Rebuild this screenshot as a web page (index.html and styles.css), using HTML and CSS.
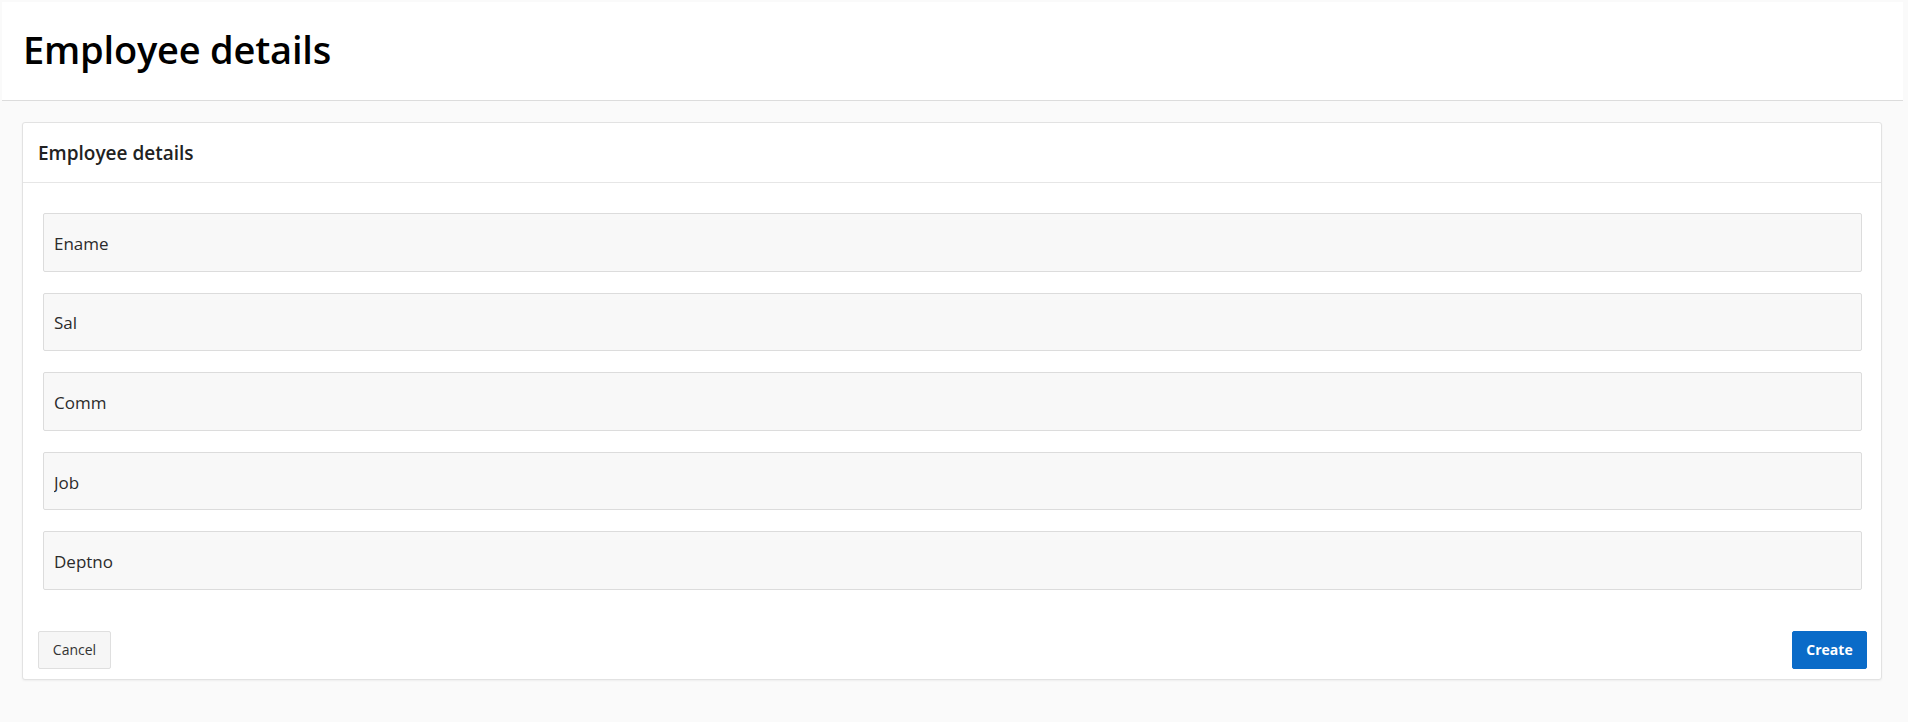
FILE: index.html
```html
<!DOCTYPE html>
<html lang="en">
<head>
<meta charset="utf-8">
<title>Employee details</title>
<link rel="stylesheet" href="styles.css">
</head>
<body>
<div class="page">
  <header class="page-header">
    <h1 class="page-title">Employee details</h1>
  </header>
  <main class="content">
    <section class="card">
      <div class="card-header">
        <h2 class="card-title">Employee details</h2>
      </div>
      <form class="card-body">
        <div class="field"><input class="field-input" type="text" placeholder="Ename"></div>
        <div class="field"><input class="field-input" type="text" placeholder="Sal"></div>
        <div class="field"><input class="field-input" type="text" placeholder="Comm"></div>
        <div class="field"><input class="field-input" type="text" placeholder="Job"></div>
        <div class="field"><input class="field-input" type="text" placeholder="Deptno"></div>
      </form>
      <div class="card-footer">
        <button class="btn btn-secondary" type="button">Cancel</button>
        <button class="btn btn-primary" type="button">Create</button>
      </div>
    </section>
  </main>
</div>
</body>
</html>
```
FILE: styles.css
```css
* { box-sizing: border-box; }

html, body {
  margin: 0;
  padding: 0;
  height: 100%;
}

body {
  background: #fafafa;
  font-family: "Segoe UI", "Open Sans", "Noto Sans", "Liberation Sans", sans-serif;
  color: #333;
}

.page {
  padding: 2px 5px 0 2px;
  border-top: 0;
  background: #fafafa;
  min-height: 100%;
}

.page-header {
  background: #fff;
  height: 99px;
  border-bottom: 1px solid #dcdcdc;
  display: flex;
  align-items: center;
  padding-left: 21px;
}

.page-title {
  margin: 0;
  font-size: 38px;
  font-weight: 600;
  color: #000;
  letter-spacing: -0.2px;
  line-height: 1;
  padding-bottom: 4px;
}

.content {
  padding: 21px 21px 0 20px;
}

.card {
  background: #fff;
  border: 1px solid #e2e2e2;
  border-radius: 3px;
  box-shadow: 0 1px 2px rgba(0, 0, 0, 0.05);
}

.card-header {
  height: 60px;
  border-bottom: 1px solid #e6e6e6;
  display: flex;
  align-items: center;
  padding-left: 15px;
}

.card-title {
  margin: 0;
  font-size: 19px;
  font-weight: 600;
  color: #222;
  line-height: 1;
  padding-top: 2px;
}

.card-body {
  padding: 30px 19px 0 20px;
  display: flex;
  flex-direction: column;
  gap: 21px;
}

.field-input {
  display: block;
  width: 100%;
  height: 58.6px;
  margin: 0;
  padding: 2px 10px 0;
  background: #f8f8f8;
  border: 1px solid #dcdcdc;
  border-radius: 2px;
  font-family: inherit;
  font-size: 17px;
  color: #333;
  outline: none;
}

.field-input::placeholder {
  color: #2b2b2b;
  opacity: 1;
}

.card-footer {
  display: flex;
  justify-content: space-between;
  align-items: center;
  padding: 41px 14px 10px 15px;
}

.btn {
  height: 38px;
  border-radius: 2px;
  font-family: inherit;
  font-size: 14px;
  padding: 0 12px;
  cursor: pointer;
}

.btn-secondary {
  width: 73px;
  background: #f6f6f6;
  border: 1px solid #dfdfdf;
  color: #333;
}

.btn-primary {
  width: 75px;
  background: #0a6bc8;
  border: 1px solid #0a6bc8;
  color: #fff;
  font-weight: 700;
}
```
